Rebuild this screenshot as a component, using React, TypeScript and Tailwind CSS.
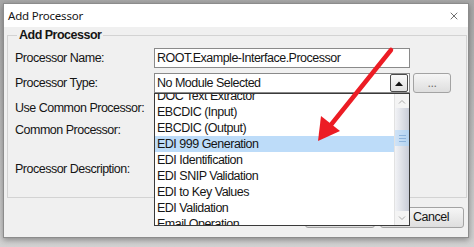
import React from 'react';
import { X, Check } from 'lucide-react';

const modules = [
  'DOC Text Extractor',
  'EBCDIC (Input)',
  'EBCDIC (Output)',
  'EDI 999 Generation',
  'EDI Identification',
  'EDI SNIP Validation',
  'EDI to Key Values',
  'EDI Validation',
  'Email Operation',
];

const selected = 'EDI 999 Generation';

function DialogButton({ children, className = '' }: { children: React.ReactNode; className?: string }) {
  return (
    <button
      className={`h-[21px] flex items-center justify-center gap-[4px] border border-[#a3a3a3] rounded-[3px] bg-gradient-to-b from-[#f6f6f6] to-[#dedede] ${className}`}
    >
      {children}
    </button>
  );
}

function ModuleList() {
  return (
    <div className="absolute left-0 top-[20px] w-[256px] h-[133px] bg-white border border-[#3a3a3a] flex overflow-hidden z-10">
      <div className="flex-1 overflow-hidden">
        <div className="-mt-[6px]">
          {modules.map((m) => (
            <div
              key={m}
              className={`h-[16px] pl-[2px] flex items-center whitespace-nowrap ${m === selected ? 'bg-[#bddcf9]' : ''}`}
            >
              {m}
            </div>
          ))}
        </div>
      </div>
      <div className="w-[15px] flex flex-col border-l border-[#e2e2e2]">
        <div className="h-[14px] flex items-center justify-center bg-[#f4f4f4]">
          <svg width="8" height="5" viewBox="0 0 8 5">
            <path d="M1 4.5 L4 1.5 L7 4.5" fill="none" stroke="#a9a9a9" strokeWidth="1" />
          </svg>
        </div>
        <div className="flex-1 bg-gradient-to-r from-[#f2f3f6] to-[#c9cdd8] flex flex-col">
          <div className="h-[22px]" />
          <div className="h-[16px] bg-gradient-to-r from-[#cfe3f7] to-[#b3d2f0] flex flex-col items-center justify-center gap-[2px]">
            <div className="w-[7px] h-px bg-[#8cb3dc]" />
            <div className="w-[7px] h-px bg-[#8cb3dc]" />
            <div className="w-[7px] h-px bg-[#8cb3dc]" />
          </div>
        </div>
        <div className="h-[14px] flex items-center justify-center bg-[#f4f4f4]">
          <svg width="8" height="5" viewBox="0 0 8 5">
            <path d="M1 0.5 L4 3.5 L7 0.5" fill="none" stroke="#a9a9a9" strokeWidth="1" />
          </svg>
        </div>
      </div>
    </div>
  );
}

export default function App() {
  return (
    <div className="relative w-[474px] h-[247px] bg-gradient-to-b from-[#a8a8a8] to-[#d2d2d2] pt-[3px] pl-[3px] font-['Liberation_Sans',Arial,sans-serif] text-[12.5px] tracking-[-0.5px] text-[#151515]">
      <div className="w-[466px] h-[235px] border border-[#8c8c8c] bg-white flex flex-col shadow-[0_2px_6px_rgba(0,0,0,0.35)]">
        <div className="h-[23px] shrink-0 flex items-center justify-between pl-[4px] pr-[8px] bg-white">
          <span className="font-['Noto_Sans',sans-serif] text-[11.5px] tracking-[-0.2px]">Add Processor</span>
          <X size={12} strokeWidth={1.3} className="text-[#222]" />
        </div>
        <div className="flex-1 bg-[#f0f0f0] pl-[3px] pr-[1px] pt-[1px]">
          <fieldset className="h-[170px] border border-[#d3d3d3] pl-[7px]">
            <legend className="ml-[2px] px-[2px] font-bold leading-[14px]">Add Processor</legend>
            <div className="mt-[6px] flex flex-col">
              <div className="h-[20px] flex items-center">
                <span className="w-[139px]">Processor Name:</span>
                <div className="w-[256px] h-[20px] border border-[#8a8a8a] bg-white flex items-center pl-[2px]">
                  ROOT.Example-Interface.Processor
                </div>
              </div>
              <div className="mt-[5px] h-[20px] flex items-center">
                <span className="w-[139px]">Processor Type:</span>
                <div className="relative w-[256px] h-[20px]">
                  <div className="h-full border border-[#8a8a8a] bg-white flex items-center pl-[2px] pr-px">
                    <span className="flex-1">No Module Selected</span>
                    <div className="w-[18px] h-[18px] border border-[#4a4a4a] rounded-[2px] bg-gradient-to-b from-[#fafafa] to-[#e0e0e0] flex items-center justify-center">
                      <svg width="8" height="5" viewBox="0 0 8 5">
                        <path d="M0 5 L4 0.5 L8 5 Z" fill="#111" />
                      </svg>
                    </div>
                  </div>
                  <ModuleList />
                </div>
                <DialogButton className="ml-[3px] w-[38px] !h-[20px] text-[#707070]">...</DialogButton>
              </div>
              <div className="mt-[5px] h-[20px] flex items-center">
                <span className="w-[139px]">Use Common Processor:</span>
                <input type="checkbox" className="w-[13px] h-[13px]" />
              </div>
              <div className="mt-[2px] h-[20px] flex items-center">
                <span className="w-[139px]">Common Processor:</span>
                <div className="w-[256px] h-[20px] border border-[#8a8a8a] bg-white" />
              </div>
              <div className="mt-[4px] h-[50px] flex items-center">
                <span className="w-[139px]">Processor Description:</span>
                <div className="w-[256px] h-[50px] border border-[#8a8a8a] bg-white" />
              </div>
            </div>
          </fieldset>
          <div className="mt-[9px] flex justify-end gap-[5px] pr-[3px]">
            <DialogButton className="w-[70px]">
              <Check size={14} className="text-[#2e8b2e]" />
              OK
            </DialogButton>
            <DialogButton className="w-[84px]">
              <X size={14} className="text-[#c62828]" />
              Cancel
            </DialogButton>
          </div>
        </div>
      </div>
      <svg className="absolute left-0 top-0 pointer-events-none z-20" width="474" height="247" viewBox="0 0 474 247">
        <line x1="391" y1="50" x2="330" y2="126" stroke="#ec1c24" strokeWidth="4.5" strokeLinecap="round" />
        <path d="M318 141 L321 116 L340 131 Z" fill="#ec1c24" />
      </svg>
    </div>
  );
}
